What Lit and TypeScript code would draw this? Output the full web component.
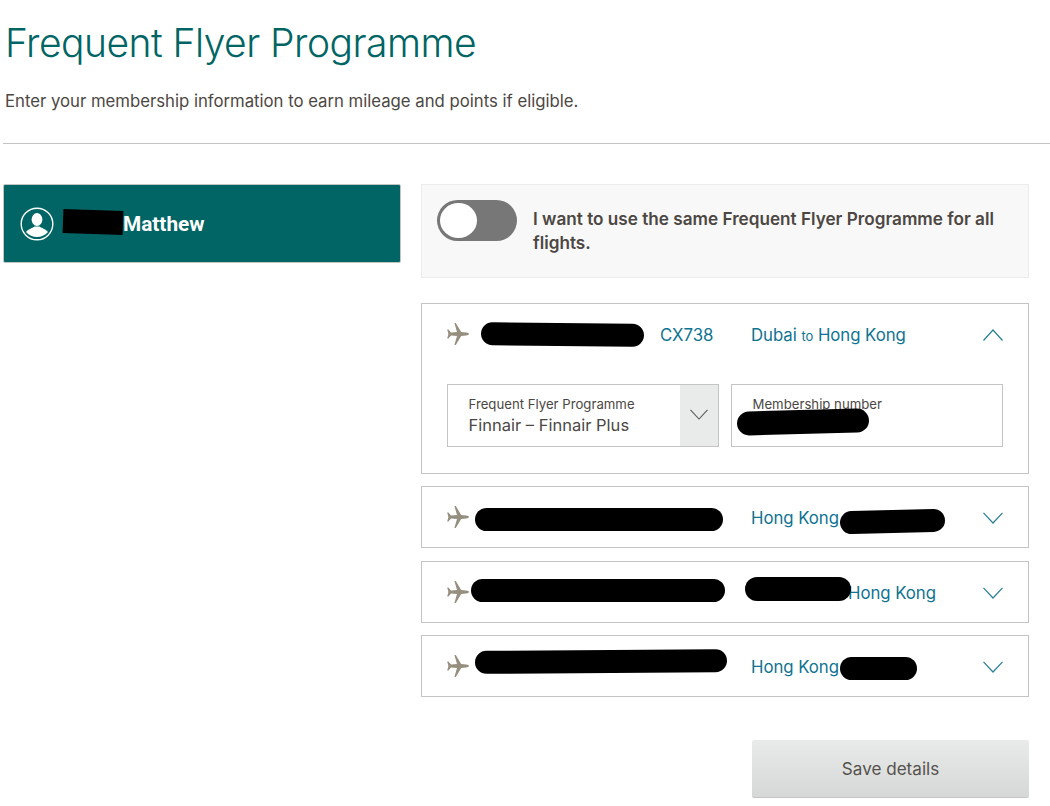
import { LitElement, html, css } from "lit";
import { customElement } from "lit/decorators.js";

const plane = html`<svg class="plane" viewBox="2 0 22 24" width="22" height="24"><path fill="#958f7f" d="M9.4 1 L10.8 1 L16.2 10 L21 10.6 C23 10.9 24 11.4 24 12 C24 12.6 23 13.1 21 13.4 L16.2 14 L10.8 23 L9.4 23 L12 14.1 L6 13.5 L3.4 16.4 L2.2 16.4 L3.4 12 L2.2 7.6 L3.4 7.6 L6 10.5 L12 9.9 Z"/></svg>`;

const chevron = (up: boolean) =>
  html`<svg class="chev" viewBox="0 0 20 12" width="20" height="12"><path fill="none" stroke="#2a7f96" stroke-width="1.2" d=${up ? "M0.5 11.5 L10 1 L19.5 11.5" : "M0.5 0.8 L10 11 L19.5 0.8"}/></svg>`;

const selectChevron = html`<svg class="chev" viewBox="0 0 18 11" width="18" height="11"><path fill="none" stroke="#5a5a5a" stroke-width="1.1" d="M0.5 0.8 L9 10 L17.5 0.8"/></svg>`;

type Stroke = { l: number; t: number; w: number; h: number; r?: number };

const ink = (s: Stroke) =>
  html`<span class="ink pill" style="left:${s.l}px;top:${s.t}px;width:${s.w}px;height:${s.h}px;transform:rotate(${s.r ?? 0}deg)"></span>`;

@customElement("app-root")
export class AppRoot extends LitElement {
  static styles = css`
    :host {
      display: block;
      width: 1050px;
      height: 806px;
      overflow: hidden;
      background: #fff;
      font-family: "Inter", "Liberation Sans", sans-serif;
      color: #4c4743;
      box-sizing: border-box;
    }
    * { box-sizing: border-box; }
    header { padding: 18px 0 0 5px; }
    h1 {
      margin: 0;
      font-size: 39px;
      line-height: 50px;
      font-weight: 300;
      color: #006564;
      letter-spacing: -0.52px;
    }
    .sub {
      margin: 23px 0 0;
      font-size: 16.76px;
      line-height: 20px;
      font-weight: 400;
      letter-spacing: -0.02px;
      color: #4c4743;
    }
    hr {
      margin: 32px 0 0 3px;
      border: 0;
      border-top: 1px solid #c4c4c4;
      height: 0;
    }
    .columns {
      display: grid;
      grid-template-columns: 398px 608px;
      column-gap: 20px;
      margin: 40px 0 0 3px;
      align-items: start;
    }
    .pax {
      position: relative;
      height: 79px;
      background: #006564;
      border: 1px solid #c4c4c4;
      border-radius: 2px;
      display: flex;
      align-items: center;
      padding-left: 16px;
      gap: 10px;
      color: #fff;
      font-family: "Roboto", sans-serif;
      font-weight: 700;
      font-size: 20.8px;
    }
    .pax .name { margin-left: 59px; }
    .ink { position: absolute; background: #000; display: block; }
    .pill { border-radius: 12px; }
    .right { display: flex; flex-direction: column; }
    .same {
      height: 94px;
      background: #f8f8f8;
      border: 1px solid #ececec;
      display: flex;
      align-items: flex-start;
      padding: 15px 15px 0 15px;
      gap: 16px;
      margin-bottom: 25px;
    }
    .toggle {
      flex: none;
      width: 80px;
      height: 41px;
      border-radius: 21px;
      background: #777;
      padding: 3px;
    }
    .knob { width: 37px; height: 35px; border-radius: 50%; background: #fff; }
    .same p {
      margin: 7px 0 0;
      font-size: 17.16px;
      line-height: 24px;
      font-weight: 600;
      color: #4c4743;
    }
    .flight {
      position: relative;
      border: 1px solid #c4c4c4;
      margin-bottom: 12px;
    }
    .flight.r1 { margin-bottom: 13px; }
    .row {
      height: 60px;
      padding-top: 1px;
      display: grid;
      grid-template-columns: 213px 91px 232px 20px;
      align-items: center;
      padding-left: 25px;
      color: #0f7391;
      font-size: 16.8px;
      font-weight: 400;
      letter-spacing: -0.05px;
      white-space: nowrap;
    }
    .row > .a { display: flex; align-items: center; margin-top: -2px; }
    .row small { font-size: 13px; }
    .shifted { margin-left: 97px; }
    .plane { display: block; }
    .chev { display: block; }
    .fields {
      display: grid;
      grid-template-columns: 272px 272px;
      column-gap: 12px;
      padding: 20px 25px 26px;
    }
    .field {
      position: relative;
      height: 63px;
      border: 1px solid #c4c4c4;
      padding: 11px 0 0 20.5px;
      font-weight: 400;
    }
    .field label { display: block; font-size: 13.2px; line-height: 17px; color: #4c4743; }
    .field .val { font-size: 16.5px; line-height: 24px; color: #4c4743; }
    .arrow {
      position: absolute;
      top: 0;
      right: 0;
      bottom: 0;
      width: 38px;
      background: #e9ebea;
      display: flex;
      align-items: center;
      justify-content: center;
      padding-bottom: 2px;
    }
    .actions { display: flex; justify-content: flex-end; margin-top: 31px; }
    .save {
      width: 277px;
      height: 58px;
      border: 0;
      border-bottom: 1px solid #c4c6c5;
      border-radius: 2px;
      background: linear-gradient(#e9ebea, #d6d8d7);
      color: #55514d;
      font: 400 17.1px "Inter", sans-serif;
    }
  `;

  private row(flight: unknown, route: unknown, up: boolean) {
    return html`<div class="row">
      <div class="a">${plane}</div>
      <div>${flight}</div>
      <div>${route}</div>
      ${chevron(up)}
    </div>`;
  }

  render() {
    return html`
      <header>
        <h1>Frequent Flyer Programme</h1>
        <p class="sub">Enter your membership information to earn mileage and points if eligible.</p>
      </header>
      <hr />
      <div class="columns">
        <div class="pax">
          <svg width="34" height="34" viewBox="0 0 34 34">
            <circle cx="17" cy="17" r="15.8" fill="none" stroke="#fff" stroke-width="1.4" />
            <ellipse cx="17" cy="12.5" rx="5.4" ry="6.5" fill="#fff" />
            <path fill="#fff" d="M6 25 C8 22 12 21.5 14.5 19.5 L19.5 19.5 C22 21.5 26 22 28 25 C25 28.5 21 30 17 30 C13 30 9 28.5 6 25 Z" />
          </svg>
          <span class="name">Matthew</span>
          <span class="ink" style="left:59px;top:25px;width:60px;height:24px;transform:rotate(2deg)"></span>
        </div>
        <div class="right">
          <div class="same">
            <div class="toggle"><div class="knob"></div></div>
            <p>I want to use the same Frequent Flyer Programme for all flights.</p>
          </div>

          <div class="flight">
            ${this.row("CX738", html`Dubai <small>to</small> Hong Kong`, true)}
            <div class="fields">
              <div class="field">
                <label>Frequent Flyer Programme</label>
                <div class="val">Finnair – Finnair Plus</div>
                <div class="arrow">${selectChevron}</div>
              </div>
              <div class="field">
                <label>Membership number</label>
              </div>
            </div>
            ${ink({ l: 59, t: 19, w: 163, h: 23, r: 0.6 })}
            ${ink({ l: 315, t: 106, w: 132, h: 24, r: -1.5 })}
          </div>

          <div class="flight r1">
            ${this.row("", "Hong Kong", false)}
            ${ink({ l: 53, t: 21, w: 248, h: 23 })}
            ${ink({ l: 418, t: 23, w: 105, h: 23, r: -1.5 })}
          </div>
          <div class="flight">
            ${this.row("", html`<span class="shifted">Hong Kong</span>`, false)}
            ${ink({ l: 49, t: 17, w: 254, h: 23 })}
            ${ink({ l: 323, t: 15, w: 106, h: 24 })}
          </div>
          <div class="flight">
            ${this.row("", "Hong Kong", false)}
            ${ink({ l: 53, t: 14, w: 252, h: 23, r: -0.4 })}
            ${ink({ l: 418, t: 21, w: 77, h: 23 })}
          </div>

          <div class="actions"><button class="save">Save details</button></div>
        </div>
      </div>
    `;
  }
}
